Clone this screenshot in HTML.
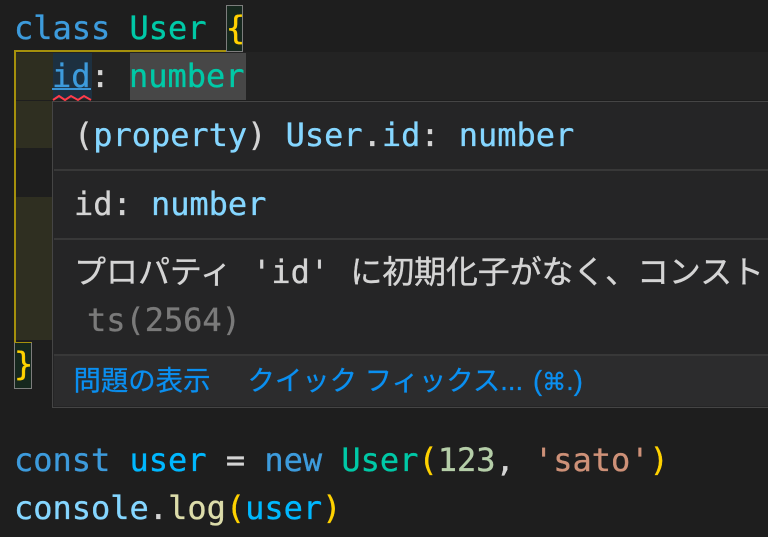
<!DOCTYPE html>
<html lang="ja">
<head>
<meta charset="utf-8">
<title>VS Code hover</title>
<style>
html,body{margin:0;padding:0;width:768px;height:537px;overflow:hidden;background:#1e1e1e}
#s{position:absolute;left:0;top:0;width:768px;height:537px;overflow:hidden;background:#1e1e1e;filter:blur(.35px)}
.b{position:absolute}
.t{position:absolute;white-space:pre;font-family:"DejaVu Sans Mono","Noto Sans CJK JP",monospace;font-size:32px;line-height:48px;height:48px;letter-spacing:-.01px;color:#d4d4d4;-webkit-text-stroke:.35px}
.k{color:#3d9bdc}.c{color:#00c9a7}.v{color:#00b8ff}.p{color:#85d6ff}.y{color:#ffd200}.f{color:#dcdcaa}.n{color:#b5cea8}.s{color:#ce9178}.w{color:#d4d4d4}
.l{position:absolute;white-space:pre;font-family:"Liberation Sans","Noto Sans CJK JP",sans-serif;font-size:27.4px;line-height:40px;color:#0a8ff0;-webkit-text-stroke:.3px}
</style>
</head>
<body>
<div id="s">
  <!-- current line -->
  <div class="b" style="left:16px;top:52px;width:752px;height:48px;background:#232323"></div>
  <!-- indent highlights -->
  <div class="b" style="left:16px;top:53px;width:37px;height:47px;background:#2e2e20"></div>
  <div class="b" style="left:16px;top:101px;width:37px;height:47px;background:#2f2f21"></div>
  <div class="b" style="left:16px;top:197px;width:37px;height:143px;background:#2f2f21"></div>
  <!-- guides -->
  <div class="b" style="left:14px;top:51px;width:2px;height:291px;background:#a5900c"></div>
  <div class="b" style="left:14px;top:50px;width:229px;height:2px;background:#a5900c"></div>
  <!-- bracket boxes -->
  <div class="b" style="left:226px;top:5px;width:15px;height:45px;background:#16281e;border:1px solid #7d7d7d"></div>
  <div class="b" style="left:14px;top:342px;width:16px;height:45px;background:#16281e;border:1px solid #7d7d7d;border-top-color:#a5900c"></div>
  <!-- word highlights -->
  <div class="b" style="left:53px;top:53px;width:39px;height:46px;background:#1d3040"></div>
  <div class="b" style="left:130px;top:53px;width:116px;height:47px;background:#474747"></div>
  <div class="b" style="left:52px;top:88px;width:39px;height:2px;background:#3a94d4"></div>
  <!-- squiggle -->
  <svg class="b" style="left:52px;top:94px" width="40" height="8" viewBox="0 0 40 8"><path d="M1 6 L7 2 L13 6 L19 2 L26 6 L32 2 L39 6" fill="none" stroke="#ff3b4a" stroke-width="2"/></svg>

  <div class="t" style="left:14px;top:4px"><span class="k">class</span> <span class="c">User</span> <span class="y">{</span></div>
  <div class="t" style="left:52px;top:52px"><span class="k">id</span>: <span class="c">number</span></div>
  <div class="t" style="left:14px;top:340px"><span class="y">}</span></div>
  <div class="t" style="left:14px;top:436px"><span class="k">const</span> <span class="v">user</span> = <span class="k">new</span> <span class="c">User</span><span class="y">(</span><span class="n">123</span>, <span class="s">'sato'</span><span class="y">)</span></div>
  <div class="t" style="left:14px;top:484px"><span class="p">console</span>.<span class="f">log</span><span class="y">(</span><span class="v">user</span><span class="y">)</span></div>

  <!-- hover -->
  <div class="b" style="left:52px;top:101px;width:716px;height:307px;background:#252526;border:solid #454545;border-width:1.5px 0 1.5px 1.5px;box-sizing:border-box"></div>
  <div class="b" style="left:54px;top:169px;width:714px;height:2px;background:#383838"></div>
  <div class="b" style="left:54px;top:238px;width:714px;height:2px;background:#383838"></div>
  <div class="b" style="left:54px;top:354px;width:714px;height:52px;background:#2c2c2d;border-top:2px solid #383838;box-sizing:border-box"></div>

  <div class="t" style="left:74px;top:111px;letter-spacing:-.03px">(<span class="p">property</span>) <span class="p">User</span>.<span class="p">id</span>: <span class="p">number</span></div>
  <div class="t" style="left:74px;top:180px;letter-spacing:-.03px">id: <span class="p">number</span></div>
  <div class="t" style="left:74px;top:248px;letter-spacing:-.03px">プロパティ<span style="margin-left:1px"> 'id' </span><span style="margin-left:2px;letter-spacing:-.15px">に初期化子がなく、コンストラクターで明確に割り当てられていません。</span></div>
  <div class="t" style="left:87px;top:296px;letter-spacing:-.03px;color:#7a7a7a">ts(2564)</div>
  <div class="l" style="left:73.5px;top:361px">問題の表示</div>
  <div class="l" style="left:247.5px;top:361px">クイック フィックス...</div>
  <div class="l" style="left:533px;top:361px">(<span style="font-family:'DejaVu Sans',sans-serif;font-size:24px">⌘</span>.)</div>
</div>
</body>
</html>
